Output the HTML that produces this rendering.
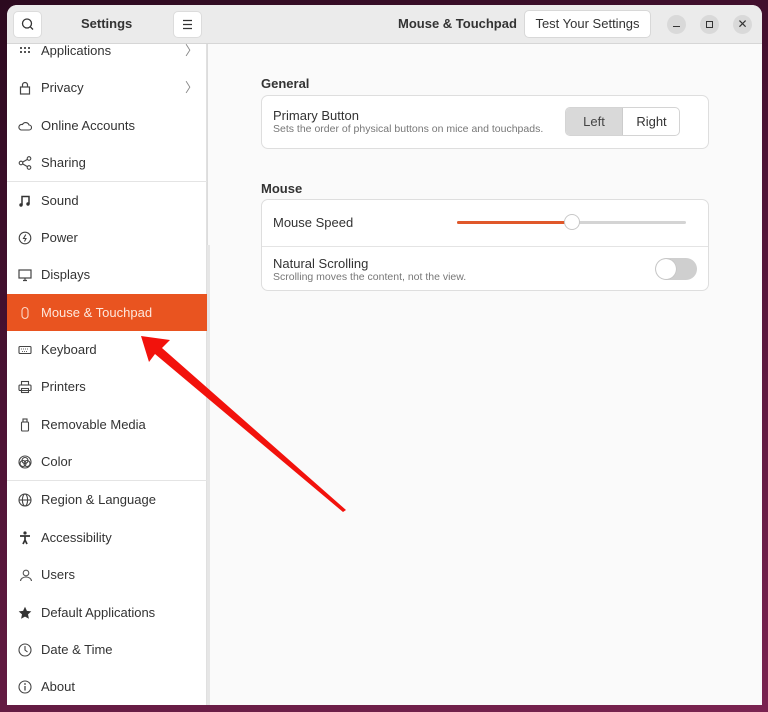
<!DOCTYPE html>
<html><head><meta charset="utf-8"><style>
*{box-sizing:border-box;margin:0;padding:0}
body{width:768px;height:712px;overflow:hidden;background:linear-gradient(160deg,#2c0a1f 0%,#4a1233 40%,#7a2350 100%);font-family:"Liberation Sans","DejaVu Sans",sans-serif;font-size:13px;color:#333;position:relative}
.win{position:absolute;left:7px;top:5px;width:755px;height:700px;background:#fafafa;border-radius:10px 10px 0 0;overflow:hidden}
.hdr{position:absolute;left:0;top:0;width:755px;height:39px;background:#ebebeb;border-bottom:1px solid #d6d6d6}
.side{position:absolute;left:0;top:39px;width:200px;height:661px;background:#fff;border-right:1px solid #e0e0e0}
.sb{position:absolute;left:200px;top:240px;width:3px;height:460px;background:#e6e6e6}
.sdiv{position:absolute;left:200px;top:39px;width:1px;height:661px;background:#dcdcdc}
.hb{position:absolute;top:6px;width:29px;height:27px;background:#fff;border:1px solid #dcdcdc;border-radius:5px}
.item{position:absolute;left:0;width:200px;height:37px;line-height:37px;padding-left:34px;color:#333;margin-top:-5px}
.item .ic{position:absolute;left:11px;top:12px;width:14px;height:14px}
.sel{background:#e95420;color:#fde7dc}
.hr{position:absolute;left:0;width:200px;height:1px;background:#e4e4e4}
.card{position:absolute;left:254px;width:448px;background:#fff;border:1px solid #dedede;border-radius:7px}
.h{position:absolute;left:254px;font-weight:bold;color:#333}
.sub{font-size:10.5px;color:#777}
.wb{position:absolute;top:10px;width:19px;height:19px;border-radius:50%;background:#d9d9d9}
</style></head><body>
<div class="win">
 <div class="hdr">
  <div class="hb" style="left:6px"><svg width="27" height="25" viewBox="0 0 27 25"><circle cx="13" cy="11.5" r="4.5" fill="none" stroke="#333" stroke-width="1.3"/><line x1="16.3" y1="14.8" x2="19" y2="17.5" stroke="#333" stroke-width="1.3"/></svg></div>
  <div style="position:absolute;left:74px;top:11px;font-weight:bold;color:#333">Settings</div>
  <div class="hb" style="left:166px"><svg width="27" height="25"><path d="M9 8.5h9M9 12.5h9M9 16.5h9" stroke="#333" stroke-width="1.2"/></svg></div>
  <div style="position:absolute;left:391px;top:11px;font-weight:bold;color:#333">Mouse &amp; Touchpad</div>
  <div style="position:absolute;left:517px;top:5px;width:127px;height:28px;background:#fff;border:1px solid #d8d8d8;border-radius:5px;text-align:center;line-height:26px;color:#333">Test Your Settings</div>
  <div class="wb" style="left:660px"><div style="position:absolute;left:6px;top:11px;width:7px;height:1.3px;background:#333"></div></div>
  <div class="wb" style="left:693px"><div style="position:absolute;left:6px;top:6px;width:7px;height:7px;border:1.2px solid #333"></div></div>
  <div class="wb" style="left:726px;font-size:12px;text-align:center;line-height:19px;color:#333">✕</div>
 </div>
 <div class="side">
  <div class="item" style="top:-7px">Applications<span style="position:absolute;left:178px;color:#888">〉</span><svg class="ic" viewBox="0 0 14 14"><g fill="#555"><rect x="2" y="3" width="2" height="2"/><rect x="6" y="3" width="2" height="2"/><rect x="10" y="3" width="2" height="2"/><rect x="2" y="7" width="2" height="2"/><rect x="6" y="7" width="2" height="2"/><rect x="10" y="7" width="2" height="2"/></g></svg></div>
  <div class="item" style="top:30px">Privacy<span style="position:absolute;left:178px;color:#888">〉</span><svg class="ic" viewBox="0 0 14 14"><rect x="2.5" y="6" width="9" height="7" fill="none" stroke="#444" stroke-width="1.2"/><path d="M4.5 6V4a2.5 2.5 0 0 1 5 0v2" fill="none" stroke="#444" stroke-width="1.2"/></svg></div>
  <div class="item" style="top:68px">Online Accounts<svg class="ic" viewBox="0 0 14 14"><path d="M3 11h8a2.5 2.5 0 0 0 0-5 3.5 3.5 0 0 0-6.5-.5A2.8 2.8 0 0 0 3 11z" fill="none" stroke="#444" stroke-width="1.1"/></svg></div>
  <div class="item" style="top:105px">Sharing<svg class="ic" viewBox="0 0 14 14"><g fill="none" stroke="#444" stroke-width="1.1"><circle cx="3" cy="7" r="1.8"/><circle cx="11" cy="2.5" r="1.8"/><circle cx="11" cy="11.5" r="1.8"/><path d="M4.6 6.1 9.4 3.4M4.6 7.9l4.8 2.7"/></g></svg></div>
  <div class="hr" style="top:137px"></div>
  <div class="item" style="top:143px">Sound<svg class="ic" viewBox="0 0 14 14"><path d="M4 11V2.5h7V10" fill="none" stroke="#333" stroke-width="1.5"/><circle cx="3" cy="11" r="1.7" fill="#333"/><circle cx="10" cy="10" r="1.7" fill="#333"/></svg></div>
  <div class="item" style="top:180px">Power<svg class="ic" viewBox="0 0 14 14"><circle cx="7" cy="7" r="5.8" fill="none" stroke="#444" stroke-width="1.1"/><path d="M7.8 3.5 5.5 7.5h2.5l-1.5 3" fill="none" stroke="#444" stroke-width="1.1"/></svg></div>
  <div class="item" style="top:217px">Displays<svg class="ic" viewBox="0 0 14 14"><rect x="1" y="2" width="12" height="8" fill="none" stroke="#444" stroke-width="1.2"/><path d="M5 12.5h4M7 10v2.5" stroke="#444" stroke-width="1.2"/></svg></div>
  <div class="item sel" style="top:255px">Mouse &amp; Touchpad<svg class="ic" viewBox="0 0 14 14"><rect x="4" y="1.5" width="6" height="11" rx="3" fill="none" stroke="#fcd8c8" stroke-width="1.1"/></svg></div>
  <div class="item" style="top:292px">Keyboard<svg class="ic" viewBox="0 0 14 14"><rect x="1" y="3.5" width="12" height="7" rx="1" fill="none" stroke="#444" stroke-width="1.1"/><path d="M3 6h8M4 8.5h6" stroke="#666" stroke-width="0.9" stroke-dasharray="1 1"/></svg></div>
  <div class="item" style="top:329px">Printers<svg class="ic" viewBox="0 0 14 14"><g fill="none" stroke="#444" stroke-width="1.1"><rect x="3.5" y="1.5" width="7" height="3.5"/><rect x="1" y="5" width="12" height="5.5" rx="1"/><rect x="3.5" y="8.5" width="7" height="4"/></g></svg></div>
  <div class="item" style="top:367px">Removable Media<svg class="ic" viewBox="0 0 14 14"><g fill="none" stroke="#444" stroke-width="1.1"><rect x="3.5" y="4" width="7" height="9" rx="1"/><rect x="5" y="1" width="4" height="3"/></g></svg></div>
  <div class="item" style="top:404px">Color<svg class="ic" viewBox="0 0 14 14"><g fill="none" stroke="#444" stroke-width="1.1"><circle cx="7" cy="7" r="6"/><circle cx="7" cy="5.5" r="3"/><circle cx="5" cy="8.5" r="3"/><circle cx="9" cy="8.5" r="3"/></g></svg></div>
  <div class="hr" style="top:436px"></div>
  <div class="item" style="top:442px">Region &amp; Language<svg class="ic" viewBox="0 0 14 14"><g fill="none" stroke="#444" stroke-width="1.1"><circle cx="7" cy="7" r="6"/><ellipse cx="7" cy="7" rx="2.6" ry="6"/><path d="M1 7h12"/></g></svg></div>
  <div class="item" style="top:480px">Accessibility<svg class="ic" viewBox="0 0 14 14"><circle cx="7" cy="2" r="1.6" fill="#333"/><path d="M2 5h10M7 5v4M7 9l-2 4M7 9l2 4" stroke="#333" stroke-width="1.7" fill="none"/></svg></div>
  <div class="item" style="top:517px">Users<svg class="ic" viewBox="0 0 14 14"><g fill="none" stroke="#555" stroke-width="1.1"><circle cx="8" cy="5" r="2.8"/><path d="M2.5 13a5.5 4 0 0 1 11 0"/></g></svg></div>
  <div class="item" style="top:555px">Default Applications<svg class="ic" viewBox="0 0 14 14"><path d="M7 .8l1.9 4.1 4.4.5-3.3 3 .9 4.4L7 10.6 3.1 12.8 4 8.4.7 5.4l4.4-.5z" fill="#333"/></svg></div>
  <div class="item" style="top:592px">Date &amp; Time<svg class="ic" viewBox="0 0 14 14"><circle cx="7" cy="7" r="6" fill="none" stroke="#444" stroke-width="1.1"/><path d="M7 3v4l2.5 2" fill="none" stroke="#444" stroke-width="1.1"/></svg></div>
  <div class="item" style="top:629px">About<svg class="ic" viewBox="0 0 14 14"><circle cx="7" cy="7" r="6" fill="none" stroke="#444" stroke-width="1.1"/><path d="M7 6v4.5" stroke="#444" stroke-width="1.3"/><circle cx="7" cy="4" r=".9" fill="#444"/></svg></div>
 </div>
 <div class="sdiv"></div>
 <div class="sb"></div>

 <div class="h" style="top:71px">General</div>
 <div class="card" style="top:90px;height:54px">
  <div style="position:absolute;left:11px;top:12px;color:#333">Primary Button</div>
  <div class="sub" style="position:absolute;left:11px;top:27px">Sets the order of physical buttons on mice and touchpads.</div>
  <div style="position:absolute;left:303px;top:11px;width:115px;height:29px;border:1px solid #d4d4d4;border-radius:5px;overflow:hidden;background:#fff">
   <div style="position:absolute;left:0;top:0;width:57px;height:27px;background:#d9d9d9;border-right:1px solid #ccc;text-align:center;line-height:27px;color:#444">Left</div>
   <div style="position:absolute;left:57px;top:0;width:57px;height:27px;text-align:center;line-height:27px;color:#333">Right</div>
  </div>
 </div>
 <div class="h" style="top:176px">Mouse</div>
 <div class="card" style="top:194px;height:92px">
  <div style="position:absolute;left:11px;top:15px">Mouse Speed</div>
  <div style="position:absolute;left:195px;top:21px;width:229px;height:3px;background:#d4d4d4;border-radius:2px"></div>
  <div style="position:absolute;left:195px;top:21px;width:113px;height:3px;background:#e0582a;border-radius:2px"></div>
  <div style="position:absolute;left:302px;top:14px;width:16px;height:16px;border-radius:50%;background:#fff;border:1px solid #c8c8c8"></div>
  <div style="position:absolute;left:0;top:46px;width:446px;height:1px;background:#e4e4e4"></div>
  <div style="position:absolute;left:11px;top:56px">Natural Scrolling</div>
  <div class="sub" style="position:absolute;left:11px;top:71px">Scrolling moves the content, not the view.</div>
  <div style="position:absolute;left:393px;top:58px;width:42px;height:22px;border-radius:11px;background:#cfcfcf"><div style="position:absolute;left:1px;top:1px;width:20px;height:20px;border-radius:50%;background:#fff;box-shadow:0 0 1px #999"></div></div>
 </div>
</div>
<svg style="position:absolute;left:0;top:0" width="768" height="712"><polygon points="141,336 170,340 162,348 346,510 343,512 155,354 149,362" fill="#f2120c"/></svg>
</body></html>
